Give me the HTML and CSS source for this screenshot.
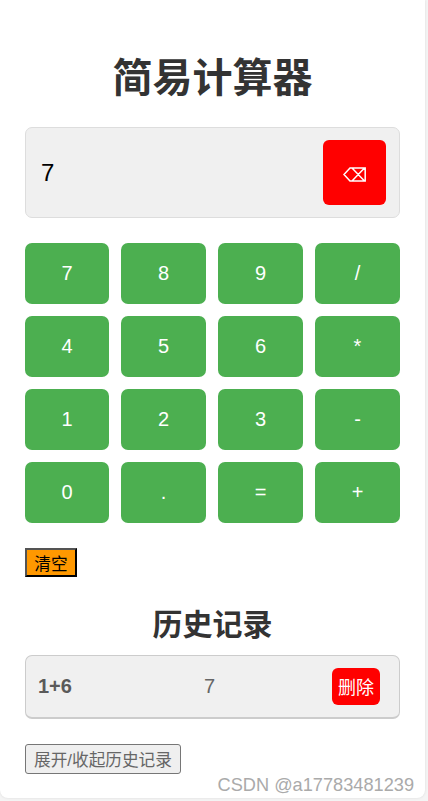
FILE: index.html
```html
<!DOCTYPE html>
<html lang="zh-CN">
<head>
<meta charset="utf-8">
<title>简易计算器</title>
<link rel="stylesheet" href="styles.css">
</head>
<body>
<main class="card">
  <h1 class="title">简易计算器</h1>
  <div class="display">
    <span class="display-value">7</span>
    <button class="backspace" aria-label="退格">
      <svg class="backspace-icon" viewBox="0 0 23 15" width="23" height="15" aria-hidden="true">
        <path d="M7 1H22.2V14H7L1 7.5Z M9 1L21.5 14 M21.5 1L9 14" fill="none" stroke="#fff" stroke-width="1.5"/>
      </svg>
    </button>
  </div>
  <div class="keys">
    <button class="key">7</button>
    <button class="key">8</button>
    <button class="key">9</button>
    <button class="key">/</button>
    <button class="key">4</button>
    <button class="key">5</button>
    <button class="key">6</button>
    <button class="key">*</button>
    <button class="key">1</button>
    <button class="key">2</button>
    <button class="key">3</button>
    <button class="key">-</button>
    <button class="key">0</button>
    <button class="key">.</button>
    <button class="key">=</button>
    <button class="key">+</button>
  </div>
  <button class="clear">清空</button>
  <h2 class="history-title">历史记录</h2>
  <div class="history-item">
    <span class="history-expr">1+6</span>
    <span class="history-result">7</span>
    <button class="history-delete">删除</button>
  </div>
  <button class="toggle">展开/收起历史记录</button>
  <span class="watermark">CSDN @a17783481239</span>
</main>
</body>
</html>
```
FILE: styles.css
```css
* {
  box-sizing: border-box;
}

html,
body {
  margin: 0;
  height: 100%;
  overflow: hidden;
}

body {
  background: #f4f4f4;
  font-family: "Liberation Sans", "Noto Sans CJK SC", sans-serif;
}

.card {
  position: relative;
  width: 425px;
  height: 798px;
  padding: 55px 25px 0;
  background: #fff;
  border-radius: 0 0 8px 8px;
  box-shadow: 0 0 3px rgba(0, 0, 0, 0.1);
}

.title {
  margin: 0 0 25px;
  font-size: 40px;
  line-height: 47px;
  font-weight: 700;
  color: #333;
  text-align: center;
}

.display {
  display: flex;
  align-items: center;
  justify-content: space-between;
  height: 91px;
  padding: 0 13px 0 15px;
  background: #f0f0f0;
  border: 1px solid #ddd;
  border-radius: 7px;
}

.display-value {
  font-size: 24px;
  color: #000;
}

.backspace {
  display: flex;
  align-items: center;
  justify-content: center;
  width: 63px;
  height: 65px;
  padding: 3px 0 0;
  background: #f00;
  border: 0;
  border-radius: 6px;
}

.keys {
  display: grid;
  grid-template-columns: 84px repeat(3, 85px);
  grid-auto-rows: 61px;
  gap: 12px;
  margin-top: 25px;
}

.key {
  padding: 0;
  background: #4caf50;
  border: 0;
  border-radius: 7px;
  color: #fff;
  font-family: inherit;
  font-size: 20px;
}

.clear {
  display: block;
  width: 52px;
  height: 29px;
  margin-top: 25px;
  padding: 0;
  background: #ff9800;
  border: 2px outset #000;
  color: #000;
  font-family: inherit;
  font-size: 16.67px;
}

.history-title {
  margin: 30px 0 13px;
  font-size: 30px;
  line-height: 35px;
  font-weight: 700;
  color: #333;
  text-align: center;
}

.history-item {
  display: flex;
  align-items: center;
  height: 64px;
  padding: 0 19px 1px 12px;
  background: #f0f0f0;
  border: 1px solid #ccc;
  border-bottom-width: 2px;
  border-radius: 7px;
}

.history-expr {
  font-size: 20px;
  font-weight: 700;
  color: #5a5a5a;
}

.history-result {
  margin-left: auto;
  margin-right: 117px;
  font-size: 20px;
  color: #666;
}

.history-delete {
  width: 48px;
  height: 37px;
  padding: 0;
  background: #f00;
  border: 0;
  border-radius: 6px;
  color: #fff;
  font-family: inherit;
  font-size: 18px;
}

.toggle {
  display: block;
  width: 156px;
  height: 30px;
  margin-top: 25px;
  padding: 0;
  background: #efefef;
  border: 1px solid #767676;
  border-radius: 3px;
  color: #666;
  font-family: inherit;
  font-size: 16.67px;
}

.watermark {
  position: absolute;
  right: 11px;
  bottom: 2px;
  font-size: 18.2px;
  line-height: 21px;
  color: #aaa;
}
```
